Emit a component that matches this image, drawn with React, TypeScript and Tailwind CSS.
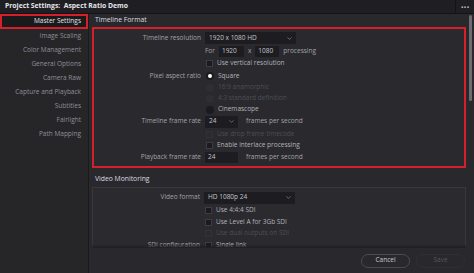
import { ChevronDown } from "lucide-react";
import type { ReactNode } from "react";

const sideItems = [
  "Master Settings",
  "Image Scaling",
  "Color Management",
  "General Options",
  "Camera Raw",
  "Capture and Playback",
  "Subtitles",
  "Fairlight",
  "Path Mapping",
];

function Row({ label, h, children }: { label?: string; h: string; children?: ReactNode }) {
  return (
    <div className={`flex items-center ${h}`}>
      <div className="w-[111px] shrink-0 pr-[4px] text-right text-[#a3a3a9]">{label}</div>
      <div className="flex items-center gap-[4px]">{children}</div>
    </div>
  );
}

function Check({ text, disabled }: { text: string; disabled?: boolean }) {
  return (
    <div className={`flex items-center gap-[4px] pl-[1px] ${disabled ? "text-[#4e4e54]" : "text-[#b4b4ba]"}`}>
      <span
        className={`h-[7px] w-[7px] border ${disabled ? "border-[#323237] bg-[#2a2a2f]" : "border-[#3c3c42] bg-[#1b1b1f]"}`}
      />
      {text}
    </div>
  );
}

function Radio({ text, on, disabled }: { text: string; on?: boolean; disabled?: boolean }) {
  return (
    <div className={`flex items-center gap-[4px] pl-[1px] ${disabled ? "text-[#4e4e54]" : "text-[#b4b4ba]"}`}>
      <span
        className={`flex h-[8px] w-[8px] items-center justify-center rounded-full ${disabled ? "bg-[#2e2e33]" : "bg-[#1b1b1f]"}`}
      >
        {on && <span className="h-[4px] w-[4px] rounded-full bg-white" />}
      </span>
      {text}
    </div>
  );
}

function Select({ value, w }: { value: string; w: string }) {
  return (
    <div className={`flex h-[12px] items-center justify-between bg-[#1d1d21] pl-[4px] pr-[3px] text-[#c4c4ca] ${w}`}>
      {value}
      <ChevronDown size={7} strokeWidth={2} className="text-[#9a9aa0]" />
    </div>
  );
}

function Field({ value, w }: { value: string; w: string }) {
  return <div className={`flex h-[11px] items-center bg-[#1d1d21] pl-[3px] text-[#c4c4ca] ${w}`}>{value}</div>;
}

export default function App() {
  return (
    <div
      className="flex h-[273px] w-[474px] flex-col overflow-hidden bg-[#28282d] text-[6.5px] leading-none"
      style={{ fontFamily: '"Open Sans", "Noto Sans", sans-serif' }}
    >
      {/* title bar */}
      <div className="flex h-[14px] shrink-0 items-center justify-between border-b border-[#141417] bg-[#1f1f23]">
        <span className="pl-[5px] text-[6.8px] font-bold text-[#e6e6ea]">Project Settings:&nbsp; Aspect Ratio Demo</span>
        <div className="flex h-full w-[19px] items-center justify-center border-l border-[#141417] text-[8px] tracking-tight text-[#b0b0b6]">
          •••
        </div>
      </div>

      <div className="flex min-h-0 flex-1">
        {/* sidebar */}
        <aside className="w-[89px] shrink-0 border-r border-[#1a1a1d] bg-[#262629]">
          {sideItems.map((item, i) => (
            <div
              key={item}
              className={
                i === 0
                  ? "flex h-[15px] items-center justify-end border-2 border-[#d4202b] bg-[#1a1a1d] pr-[5px] text-[#e2e2e6]"
                  : "flex h-[14px] items-center justify-end pr-[7px] text-[#8f8f95]"
              }
            >
              {item}
            </div>
          ))}
        </aside>

        {/* main */}
        <main className="flex min-w-0 flex-1 flex-col">
          <div className="flex min-h-0 flex-1">
            <div className="relative flex-1 overflow-hidden pl-[3px] pr-[2px]">
              <div className="flex h-[13px] items-center pl-[3px] text-[6.8px] text-[#dcdce0]">Timeline Format</div>

              <div className="border-2 border-[#d4202b] bg-[#29292e] pb-[3px] pt-[2px]">
                <Row label="Timeline resolution" h="h-[14px]">
                  <Select value="1920 x 1080 HD" w="w-[91px]" />
                </Row>
                <Row h="h-[12px]">
                  <span className="text-[#a3a3a9]">For</span>
                  <Field value="1920" w="w-[25px]" />
                  <span className="text-[#a3a3a9]">x</span>
                  <Field value="1080" w="w-[24px]" />
                  <span className="text-[#a3a3a9]">processing</span>
                </Row>
                <Row h="h-[13px]">
                  <Check text="Use vertical resolution" />
                </Row>
                <Row label="Pixel aspect ratio" h="h-[12px]">
                  <Radio text="Square" on />
                </Row>
                <Row h="h-[11px]">
                  <Radio text="16:9 anamorphic" disabled />
                </Row>
                <Row h="h-[11px]">
                  <Radio text="4:3 standard definition" disabled />
                </Row>
                <Row h="h-[11px]">
                  <Radio text="Cinemascope" />
                </Row>
                <Row label="Timeline frame rate" h="h-[13px]">
                  <Select value="24" w="w-[33px]" />
                  <span className="pl-[4px] text-[#a3a3a9]">frames per second</span>
                </Row>
                <Row h="h-[12px]">
                  <Check text="Use drop frame timecode" disabled />
                </Row>
                <Row h="h-[11px]">
                  <Check text="Enable interlace processing" />
                </Row>
                <Row label="Playback frame rate" h="h-[12px]">
                  <Field value="24" w="w-[33px]" />
                  <span className="pl-[4px] text-[#a3a3a9]">frames per second</span>
                </Row>
              </div>

              <div className="flex h-[19px] items-center pl-[3px] pt-[4px] text-[6.8px] text-[#dcdce0]">Video Monitoring</div>

              <div className="border border-[#38383e] bg-[#2a2a2f] pt-[3px]">
                <Row label="Video format" h="h-[13px]">
                  <Select value="HD 1080p 24" w="w-[91px]" />
                </Row>
                <Row h="h-[12px]">
                  <Check text="Use 4:4:4 SDI" />
                </Row>
                <Row h="h-[12px]">
                  <Check text="Use Level A for 3Gb SDI" />
                </Row>
                <Row h="h-[11px]">
                  <Check text="Use dual outputs on SDI" disabled />
                </Row>
                <Row label="SDI configuration" h="h-[12px]">
                  <Check text="Single link" />
                </Row>
              </div>
              <div className="pointer-events-none absolute bottom-0 left-[3px] right-[2px] h-[4px] bg-gradient-to-b from-transparent to-[#1f1f23]" />
            </div>

            {/* scrollbar */}
            <div className="w-[6px] shrink-0 pt-[1px]">
              <div className="ml-[1px] h-[86px] w-[3px] rounded-full bg-[#6c6c72]" />
            </div>
          </div>

          {/* footer */}
          <div className="flex h-[25px] shrink-0 items-center justify-end gap-[6px] pr-[9px]">
            <button className="h-[14px] w-[49px] rounded-full border border-[#4a4a50] text-[6.5px] text-[#c8c8ce]">
              Cancel
            </button>
            <button className="h-[14px] w-[49px] rounded-full border border-[#2f2f34] text-[6.5px] text-[#56565c]">
              Save
            </button>
          </div>
        </main>
      </div>
    </div>
  );
}
